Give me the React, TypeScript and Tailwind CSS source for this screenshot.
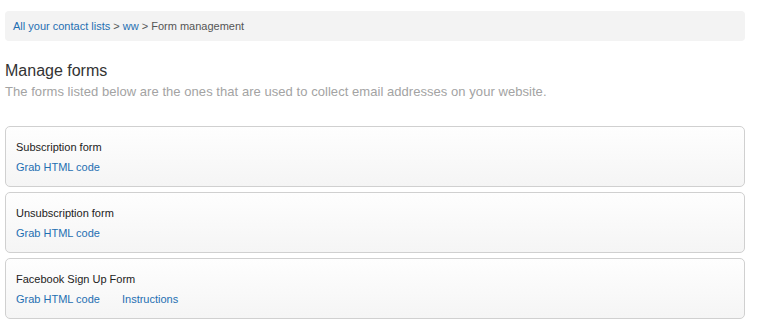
const forms = [
  { name: "Subscription form", links: ["Grab HTML code"] },
  { name: "Unsubscription form", links: ["Grab HTML code"] },
  { name: "Facebook Sign Up Form", links: ["Grab HTML code", "Instructions"] },
];

export default function App() {
  return (
    <div className="min-h-[330px] bg-white font-['Liberation_Sans',Arial,sans-serif] text-[#333]">
      <div className="ml-[5px] w-[740px] pt-[11px]">
        <div className="rounded-[4px] bg-[#f3f3f3] px-[8px] text-[11px] leading-[30px] text-[#555]">
          <a href="#" className="text-[#1f6fb2]">All your contact lists</a>
          {" > "}
          <a href="#" className="text-[#1f6fb2]">ww</a>
          {" > "}
          Form management
        </div>

        <h1 className="mt-[20px] text-[16px] leading-[20px] text-[#333]">Manage forms</h1>
        <p className="mt-[2px] text-[13px] leading-[18px] tracking-[0.05px] text-[#a3a3a3]">
          The forms listed below are the ones that are used to collect email addresses on your website.
        </p>

        <div className="mt-[25px] flex flex-col gap-[5px]">
          {forms.map((f) => (
            <div
              key={f.name}
              className="rounded-[5px] border border-[#d0d0d0] bg-gradient-to-b from-[#fefefe] to-[#f5f5f5] px-[10px] pb-[9px] pt-[10px] text-[11px] leading-[20px]"
            >
              <div className="text-[#222]">{f.name}</div>
              <div className="flex gap-[22px]">
                {f.links.map((l) => (
                  <a key={l} href="#" className="text-[#1f6fb2]">{l}</a>
                ))}
              </div>
            </div>
          ))}
        </div>
      </div>
    </div>
  );
}
